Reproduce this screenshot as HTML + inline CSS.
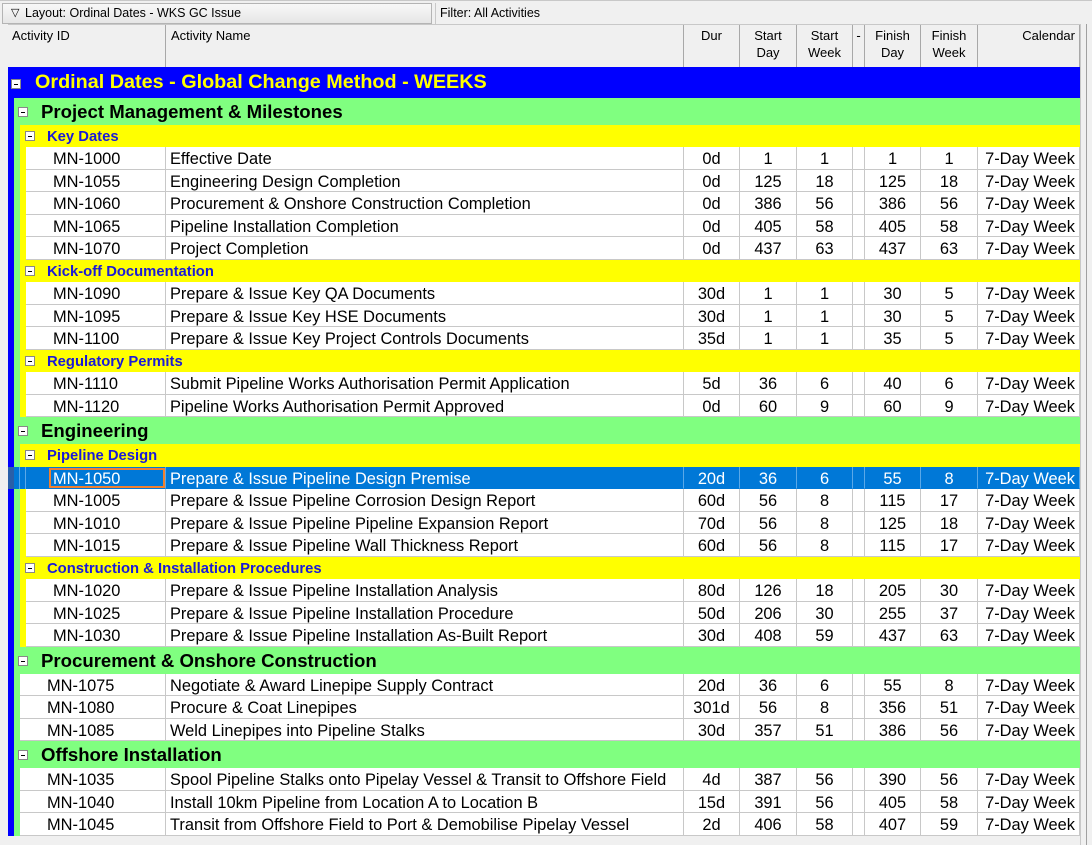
<!DOCTYPE html>
<html><head><meta charset="utf-8"><style>
*{box-sizing:border-box;margin:0;padding:0}
body{width:1092px;height:845px;background:#f0f0f0;font-family:"Liberation Sans",Arial,sans-serif;position:relative;overflow:hidden;color:#000}
.top{position:absolute;top:0;left:0;width:1092px;height:24px;background:#f0f0f0;border-top:1px solid #c8c8c8}
.btn{position:absolute;left:2px;top:2px;width:430px;height:21px;border:1px solid #b4b4b4;background:linear-gradient(#f8f8f8,#e6e6e6);font-size:12.5px;line-height:19px;padding-left:22px}
.filt{position:absolute;left:435px;top:2px;width:645px;height:21px;border-left:1px solid #c8c8c8;font-size:12.5px;line-height:20px;padding-left:4px}
.hdr{position:absolute;top:24px;left:8px;width:1072px;height:43px;background:#f0f0f0;border-top:1px solid #c8c8c8}
.hc{position:absolute;top:0;height:43px;border-right:1px solid #a8a8a8;font-size:13px;line-height:17px;padding-top:2px;color:#000}
.rows{position:absolute;top:67px;left:8px;width:1072px}
.r{position:relative;display:flex;width:1072px}
.title{height:30.5px;background:#0000ff;color:#ffff00;font-weight:bold;font-size:19.8px;line-height:30px}
.g{height:27px;font-weight:bold;font-size:18.6px;line-height:28px}
.y{height:22.5px;font-weight:bold;font-size:14.8px;line-height:25px;color:#1a1ad8}
.a{height:22.5px;font-size:16.4px;line-height:24px}
.box{position:absolute;width:10px;height:10px;border:1px solid #888;background:#fff}
.box:after{content:"";position:absolute;left:2px;top:4px;width:4px;height:1px;background:#000}
.c{height:100%;border-right:1px solid #c8c8c8;border-bottom:1px solid #c8c8c8;background:#fff;white-space:nowrap;overflow:hidden}
.id{padding-left:27px}
.nm{width:518px;padding-left:4px}
.n{text-align:center}
.d{width:56px}.sd{width:57px}.sw{width:56px}.bl{width:12px}.fd{width:56px}.fw{width:57px}
.cal{width:102px;text-align:right;padding-right:4px}
.sel .c{background:#0078d7;color:#fff;border-right-color:#5aa8e8;border-bottom-color:#0078d7}
.right{position:absolute;left:1080px;top:24px;width:12px;height:821px;background:#f0f0f0;border-left:1px solid #c8c8c8}
.right:after{content:"";position:absolute;left:5px;top:0;width:1px;height:821px;background:#a0a0a0}
</style></head><body>
<div class="top"><div class="btn"><span style="position:absolute;left:8px;top:0;font-size:11px">&#9661;</span>Layout: Ordinal Dates - WKS GC Issue</div><div class="filt">Filter: All Activities</div></div>
<div class="hdr">
<div class="hc" style="left:0;width:158px;padding-left:4px">Activity ID</div>
<div class="hc" style="left:158px;width:518px;padding-left:5px">Activity Name</div>
<div class="hc" style="left:676px;width:56px;text-align:center">Dur</div>
<div class="hc" style="left:732px;width:57px;text-align:center">Start<br>Day</div>
<div class="hc" style="left:789px;width:56px;text-align:center">Start<br>Week</div>
<div class="hc" style="left:845px;width:12px;text-align:center">-</div>
<div class="hc" style="left:857px;width:56px;text-align:center">Finish<br>Day</div>
<div class="hc" style="left:913px;width:57px;text-align:center">Finish<br>Week</div>
<div class="hc" style="left:970px;width:102px;text-align:right;padding-right:4px">Calendar</div>
</div>
<div class="right"></div>
<div class="rows">
<div class="r title"><div class="box" style="left:3px;top:12px"></div><span style="padding-left:27px">Ordinal Dates - Global Change Method - WEEKS</span></div>
<div class="r g" style="background:linear-gradient(to right,#0000ff 0 6px,#80ff80 6px)"><div class="box" style="left:10px;top:9px"></div><span style="padding-left:33px">Project Management &amp; Milestones</span></div>
<div class="r y" style="background:linear-gradient(to right,#0000ff 0 6px,#80ff80 6px 12px,#ffff00 12px)"><div class="box" style="left:17px;top:6px"></div><span style="padding-left:39px">Key Dates</span></div>
<div class="r a" style="background:linear-gradient(to right,#0000ff 0 6px,#80ff80 6px 12px,#ffff00 12px 18px)"><div style="width:18px"></div><div class="c id" style="width:140px">MN-1000</div><div class="c nm">Effective Date</div><div class="c n d">0d</div><div class="c n sd">1</div><div class="c n sw">1</div><div class="c bl"></div><div class="c n fd">1</div><div class="c n fw">1</div><div class="c cal">7-Day Week</div></div>
<div class="r a" style="background:linear-gradient(to right,#0000ff 0 6px,#80ff80 6px 12px,#ffff00 12px 18px)"><div style="width:18px"></div><div class="c id" style="width:140px">MN-1055</div><div class="c nm">Engineering Design Completion</div><div class="c n d">0d</div><div class="c n sd">125</div><div class="c n sw">18</div><div class="c bl"></div><div class="c n fd">125</div><div class="c n fw">18</div><div class="c cal">7-Day Week</div></div>
<div class="r a" style="background:linear-gradient(to right,#0000ff 0 6px,#80ff80 6px 12px,#ffff00 12px 18px)"><div style="width:18px"></div><div class="c id" style="width:140px">MN-1060</div><div class="c nm">Procurement &amp; Onshore Construction Completion</div><div class="c n d">0d</div><div class="c n sd">386</div><div class="c n sw">56</div><div class="c bl"></div><div class="c n fd">386</div><div class="c n fw">56</div><div class="c cal">7-Day Week</div></div>
<div class="r a" style="background:linear-gradient(to right,#0000ff 0 6px,#80ff80 6px 12px,#ffff00 12px 18px)"><div style="width:18px"></div><div class="c id" style="width:140px">MN-1065</div><div class="c nm">Pipeline Installation Completion</div><div class="c n d">0d</div><div class="c n sd">405</div><div class="c n sw">58</div><div class="c bl"></div><div class="c n fd">405</div><div class="c n fw">58</div><div class="c cal">7-Day Week</div></div>
<div class="r a" style="background:linear-gradient(to right,#0000ff 0 6px,#80ff80 6px 12px,#ffff00 12px 18px)"><div style="width:18px"></div><div class="c id" style="width:140px">MN-1070</div><div class="c nm">Project Completion</div><div class="c n d">0d</div><div class="c n sd">437</div><div class="c n sw">63</div><div class="c bl"></div><div class="c n fd">437</div><div class="c n fw">63</div><div class="c cal">7-Day Week</div></div>
<div class="r y" style="background:linear-gradient(to right,#0000ff 0 6px,#80ff80 6px 12px,#ffff00 12px)"><div class="box" style="left:17px;top:6px"></div><span style="padding-left:39px">Kick-off Documentation</span></div>
<div class="r a" style="background:linear-gradient(to right,#0000ff 0 6px,#80ff80 6px 12px,#ffff00 12px 18px)"><div style="width:18px"></div><div class="c id" style="width:140px">MN-1090</div><div class="c nm">Prepare &amp; Issue Key QA Documents</div><div class="c n d">30d</div><div class="c n sd">1</div><div class="c n sw">1</div><div class="c bl"></div><div class="c n fd">30</div><div class="c n fw">5</div><div class="c cal">7-Day Week</div></div>
<div class="r a" style="background:linear-gradient(to right,#0000ff 0 6px,#80ff80 6px 12px,#ffff00 12px 18px)"><div style="width:18px"></div><div class="c id" style="width:140px">MN-1095</div><div class="c nm">Prepare &amp; Issue Key HSE Documents</div><div class="c n d">30d</div><div class="c n sd">1</div><div class="c n sw">1</div><div class="c bl"></div><div class="c n fd">30</div><div class="c n fw">5</div><div class="c cal">7-Day Week</div></div>
<div class="r a" style="background:linear-gradient(to right,#0000ff 0 6px,#80ff80 6px 12px,#ffff00 12px 18px)"><div style="width:18px"></div><div class="c id" style="width:140px">MN-1100</div><div class="c nm">Prepare &amp; Issue Key Project Controls Documents</div><div class="c n d">35d</div><div class="c n sd">1</div><div class="c n sw">1</div><div class="c bl"></div><div class="c n fd">35</div><div class="c n fw">5</div><div class="c cal">7-Day Week</div></div>
<div class="r y" style="background:linear-gradient(to right,#0000ff 0 6px,#80ff80 6px 12px,#ffff00 12px)"><div class="box" style="left:17px;top:6px"></div><span style="padding-left:39px">Regulatory Permits</span></div>
<div class="r a" style="background:linear-gradient(to right,#0000ff 0 6px,#80ff80 6px 12px,#ffff00 12px 18px)"><div style="width:18px"></div><div class="c id" style="width:140px">MN-1110</div><div class="c nm">Submit Pipeline Works Authorisation Permit Application</div><div class="c n d">5d</div><div class="c n sd">36</div><div class="c n sw">6</div><div class="c bl"></div><div class="c n fd">40</div><div class="c n fw">6</div><div class="c cal">7-Day Week</div></div>
<div class="r a" style="background:linear-gradient(to right,#0000ff 0 6px,#80ff80 6px 12px,#ffff00 12px 18px)"><div style="width:18px"></div><div class="c id" style="width:140px">MN-1120</div><div class="c nm">Pipeline Works Authorisation Permit Approved</div><div class="c n d">0d</div><div class="c n sd">60</div><div class="c n sw">9</div><div class="c bl"></div><div class="c n fd">60</div><div class="c n fw">9</div><div class="c cal">7-Day Week</div></div>
<div class="r g" style="background:linear-gradient(to right,#0000ff 0 6px,#80ff80 6px)"><div class="box" style="left:10px;top:9px"></div><span style="padding-left:33px">Engineering</span></div>
<div class="r y" style="background:linear-gradient(to right,#0000ff 0 6px,#80ff80 6px 12px,#ffff00 12px)"><div class="box" style="left:17px;top:6px"></div><span style="padding-left:39px">Pipeline Design</span></div>
<div class="r a sel" style="background:linear-gradient(to right,#2a5fa8 0 6px,#0078d7 6px 11px,#5aa8e8 11px 12px,#0078d7 12px 17px,#5aa8e8 17px 18px)"><div style="width:18px"></div><div class="c id" style="width:140px;padding-left:0"><div style="margin:1px 0 0 23px;width:116px;height:20px;border:2px solid #f08030;line-height:18px;padding-left:2px">MN-1050</div></div><div class="c nm">Prepare &amp; Issue Pipeline Design Premise</div><div class="c n d">20d</div><div class="c n sd">36</div><div class="c n sw">6</div><div class="c bl"></div><div class="c n fd">55</div><div class="c n fw">8</div><div class="c cal">7-Day Week</div></div>
<div class="r a" style="background:linear-gradient(to right,#0000ff 0 6px,#80ff80 6px 12px,#ffff00 12px 18px)"><div style="width:18px"></div><div class="c id" style="width:140px">MN-1005</div><div class="c nm">Prepare &amp; Issue Pipeline Corrosion Design Report</div><div class="c n d">60d</div><div class="c n sd">56</div><div class="c n sw">8</div><div class="c bl"></div><div class="c n fd">115</div><div class="c n fw">17</div><div class="c cal">7-Day Week</div></div>
<div class="r a" style="background:linear-gradient(to right,#0000ff 0 6px,#80ff80 6px 12px,#ffff00 12px 18px)"><div style="width:18px"></div><div class="c id" style="width:140px">MN-1010</div><div class="c nm">Prepare &amp; Issue Pipeline Pipeline Expansion Report</div><div class="c n d">70d</div><div class="c n sd">56</div><div class="c n sw">8</div><div class="c bl"></div><div class="c n fd">125</div><div class="c n fw">18</div><div class="c cal">7-Day Week</div></div>
<div class="r a" style="background:linear-gradient(to right,#0000ff 0 6px,#80ff80 6px 12px,#ffff00 12px 18px)"><div style="width:18px"></div><div class="c id" style="width:140px">MN-1015</div><div class="c nm">Prepare &amp; Issue Pipeline Wall Thickness Report</div><div class="c n d">60d</div><div class="c n sd">56</div><div class="c n sw">8</div><div class="c bl"></div><div class="c n fd">115</div><div class="c n fw">17</div><div class="c cal">7-Day Week</div></div>
<div class="r y" style="background:linear-gradient(to right,#0000ff 0 6px,#80ff80 6px 12px,#ffff00 12px)"><div class="box" style="left:17px;top:6px"></div><span style="padding-left:39px">Construction &amp; Installation Procedures</span></div>
<div class="r a" style="background:linear-gradient(to right,#0000ff 0 6px,#80ff80 6px 12px,#ffff00 12px 18px)"><div style="width:18px"></div><div class="c id" style="width:140px">MN-1020</div><div class="c nm">Prepare &amp; Issue Pipeline Installation Analysis</div><div class="c n d">80d</div><div class="c n sd">126</div><div class="c n sw">18</div><div class="c bl"></div><div class="c n fd">205</div><div class="c n fw">30</div><div class="c cal">7-Day Week</div></div>
<div class="r a" style="background:linear-gradient(to right,#0000ff 0 6px,#80ff80 6px 12px,#ffff00 12px 18px)"><div style="width:18px"></div><div class="c id" style="width:140px">MN-1025</div><div class="c nm">Prepare &amp; Issue Pipeline Installation Procedure</div><div class="c n d">50d</div><div class="c n sd">206</div><div class="c n sw">30</div><div class="c bl"></div><div class="c n fd">255</div><div class="c n fw">37</div><div class="c cal">7-Day Week</div></div>
<div class="r a" style="background:linear-gradient(to right,#0000ff 0 6px,#80ff80 6px 12px,#ffff00 12px 18px)"><div style="width:18px"></div><div class="c id" style="width:140px">MN-1030</div><div class="c nm">Prepare &amp; Issue Pipeline Installation As-Built Report</div><div class="c n d">30d</div><div class="c n sd">408</div><div class="c n sw">59</div><div class="c bl"></div><div class="c n fd">437</div><div class="c n fw">63</div><div class="c cal">7-Day Week</div></div>
<div class="r g" style="background:linear-gradient(to right,#0000ff 0 6px,#80ff80 6px)"><div class="box" style="left:10px;top:9px"></div><span style="padding-left:33px">Procurement &amp; Onshore Construction</span></div>
<div class="r a" style="background:linear-gradient(to right,#0000ff 0 6px,#80ff80 6px 12px)"><div style="width:12px"></div><div class="c id" style="width:146px">MN-1075</div><div class="c nm">Negotiate &amp; Award Linepipe Supply Contract</div><div class="c n d">20d</div><div class="c n sd">36</div><div class="c n sw">6</div><div class="c bl"></div><div class="c n fd">55</div><div class="c n fw">8</div><div class="c cal">7-Day Week</div></div>
<div class="r a" style="background:linear-gradient(to right,#0000ff 0 6px,#80ff80 6px 12px)"><div style="width:12px"></div><div class="c id" style="width:146px">MN-1080</div><div class="c nm">Procure &amp; Coat Linepipes</div><div class="c n d">301d</div><div class="c n sd">56</div><div class="c n sw">8</div><div class="c bl"></div><div class="c n fd">356</div><div class="c n fw">51</div><div class="c cal">7-Day Week</div></div>
<div class="r a" style="background:linear-gradient(to right,#0000ff 0 6px,#80ff80 6px 12px)"><div style="width:12px"></div><div class="c id" style="width:146px">MN-1085</div><div class="c nm">Weld Linepipes into Pipeline Stalks</div><div class="c n d">30d</div><div class="c n sd">357</div><div class="c n sw">51</div><div class="c bl"></div><div class="c n fd">386</div><div class="c n fw">56</div><div class="c cal">7-Day Week</div></div>
<div class="r g" style="background:linear-gradient(to right,#0000ff 0 6px,#80ff80 6px)"><div class="box" style="left:10px;top:9px"></div><span style="padding-left:33px">Offshore Installation</span></div>
<div class="r a" style="background:linear-gradient(to right,#0000ff 0 6px,#80ff80 6px 12px)"><div style="width:12px"></div><div class="c id" style="width:146px">MN-1035</div><div class="c nm">Spool Pipeline Stalks onto Pipelay Vessel &amp; Transit to Offshore Field</div><div class="c n d">4d</div><div class="c n sd">387</div><div class="c n sw">56</div><div class="c bl"></div><div class="c n fd">390</div><div class="c n fw">56</div><div class="c cal">7-Day Week</div></div>
<div class="r a" style="background:linear-gradient(to right,#0000ff 0 6px,#80ff80 6px 12px)"><div style="width:12px"></div><div class="c id" style="width:146px">MN-1040</div><div class="c nm">Install 10km Pipeline from Location A to Location B</div><div class="c n d">15d</div><div class="c n sd">391</div><div class="c n sw">56</div><div class="c bl"></div><div class="c n fd">405</div><div class="c n fw">58</div><div class="c cal">7-Day Week</div></div>
<div class="r a" style="background:linear-gradient(to right,#0000ff 0 6px,#80ff80 6px 12px)"><div style="width:12px"></div><div class="c id" style="width:146px">MN-1045</div><div class="c nm">Transit from Offshore Field to Port &amp; Demobilise Pipelay Vessel</div><div class="c n d">2d</div><div class="c n sd">406</div><div class="c n sw">58</div><div class="c bl"></div><div class="c n fd">407</div><div class="c n fw">59</div><div class="c cal">7-Day Week</div></div>
</div>
</body></html>
